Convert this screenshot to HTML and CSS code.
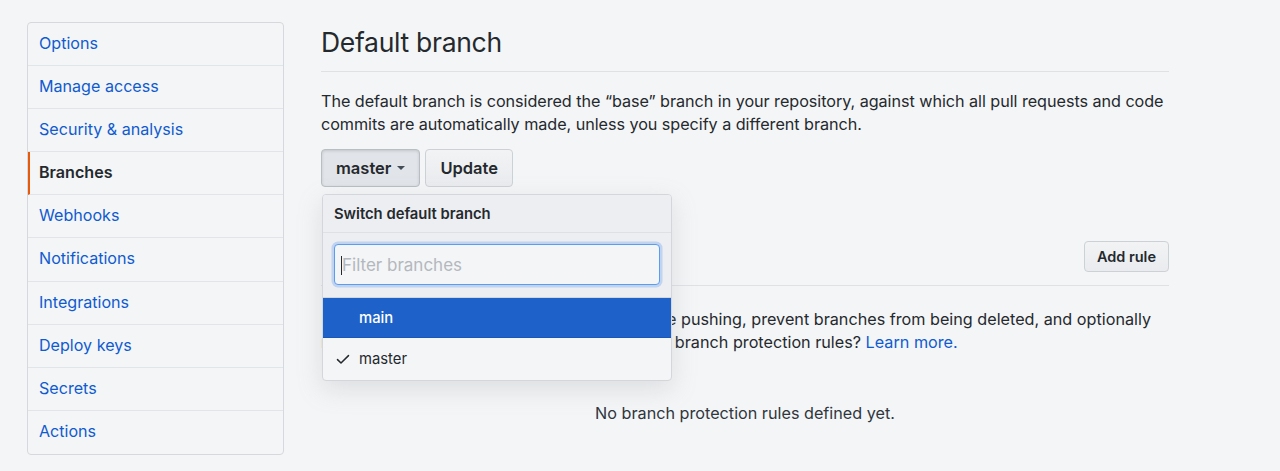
FILE: index.html
```html
<!DOCTYPE html>
<html lang="en">
<head>
<meta charset="utf-8">
<title>Branches</title>
<link rel="stylesheet" href="styles.css">
</head>
<body>
<div class="page">
  <nav class="sidebar">
    <a class="menu-item" href="#">Options</a>
    <a class="menu-item" href="#">Manage access</a>
    <a class="menu-item" href="#">Security &amp; analysis</a>
    <a class="menu-item selected" href="#">Branches</a>
    <a class="menu-item" href="#">Webhooks</a>
    <a class="menu-item" href="#">Notifications</a>
    <a class="menu-item" href="#">Integrations</a>
    <a class="menu-item" href="#">Deploy keys</a>
    <a class="menu-item" href="#">Secrets</a>
    <a class="menu-item" href="#">Actions</a>
  </nav>
  <main class="main">
    <div class="subhead">
      <h2 class="subhead-heading">Default branch</h2>
    </div>
    <p class="desc">The default branch is considered the “base” branch in your repository, against which all pull requests and code commits are automatically made, unless you specify a different branch.</p>
    <div class="branch-form">
      <div class="btn-group">
        <button class="btn btn-selected">master <span class="caret"></span></button>
        <button class="btn">Update</button>
      </div>
      <div class="dropdown">
        <div class="dropdown-header">Switch default branch</div>
        <div class="dropdown-filter">
          <div class="filter-input"><span class="cursor"></span><span class="placeholder">Filter branches</span></div>
        </div>
        <div class="dropdown-item active"><span class="check-slot"></span>main</div>
        <div class="dropdown-item"><span class="check-slot"><svg width="16" height="16" viewBox="0 0 16 16"><polyline points="2.5,8.6 6,12 13.5,4.6" fill="none" stroke="#24292e" stroke-width="1.5" stroke-linecap="round" stroke-linejoin="round"/></svg></span>master</div>
      </div>
    </div>

    <div class="subhead subhead-2">
      <h2 class="subhead-heading">Branch protection rules</h2>
      <button class="btn btn-sm">Add rule</button>
    </div>
    <p class="desc desc-2">Define branch protection rules to disable force pushing, prevent branches from being deleted, and optionally require status checks before merging. New to branch protection rules? <a href="#" class="link">Learn more.</a></p>
    <div class="blankslate">No branch protection rules defined yet.</div>
  </main>
</div>
</body>
</html>
```

FILE: styles.css
```css
* { box-sizing: border-box; }
html, body {
  margin: 0;
  background: #f4f5f6;
  color: #24292e;
  font-family: Inter, "Noto Sans", sans-serif;
  font-size: 16px;
}
.page {
  display: flex;
  gap: 37px;
  padding: 22px 0 0 27px;
}
.sidebar {
  width: 257px;
  flex: none;
  align-self: flex-start;
  border: 1px solid #d5d8dc;
  border-radius: 4px;
  display: flex;
  flex-direction: column;
}
.menu-item {
  display: block;
  padding: 9px 11px 11px;
  line-height: 22px;
  height: 43.1px;
  color: #0f5bd0;
  text-decoration: none;
  border-bottom: 1px solid #e1e4e8;
  font-size: 16.1px;
}
.menu-item:last-child { border-bottom: 0; }
.menu-item.selected {
  color: #24292e;
  font-weight: 600;
  border-left: 2px solid #e8590c;
  padding-left: 9px;
}
.main {
  width: 848px;
  flex: none;
}
.subhead {
  display: flex;
  align-items: center;
  justify-content: space-between;
  border-bottom: 1px solid #dfe2e5;
  padding-top: 0;
  padding-bottom: 9px;
  margin: 0;
}
.subhead-heading {
  margin: 0;
  font-size: 26.5px;
  letter-spacing: -0.3px;
  font-weight: 400;
  line-height: 40px;
}
.desc {
  margin: 18px 0 0;
  font-size: 16.2px;
  letter-spacing: -0.05px;
  line-height: 23px;
}
.branch-form {
  position: relative;
  margin-top: 13px;
}
.btn-group {
  display: flex;
  gap: 5px;
}
.btn {
  font-family: inherit;
  font-size: 16.5px;
  font-weight: 600;
  color: #24292e;
  height: 38px;
  padding: 0 14px;
  border: 1px solid #cdd1d6;
  border-radius: 4px;
  background: linear-gradient(#f2f3f5, #e9ebee);
  display: inline-flex;
  align-items: center;
  gap: 6px;
}
.btn-selected {
  background: #e1e4e8;
  border-color: #b9bec4;
  box-shadow: inset 0 1px 3px rgba(27,31,35,0.15);
}
.caret {
  width: 0;
  height: 0;
  border-left: 4px solid transparent;
  border-right: 4px solid transparent;
  border-top: 4px solid #444d56;
}
.dropdown {
  position: absolute;
  top: 45px;
  left: 1px;
  width: 350px;
  background: #f4f5f6;
  border: 1px solid #d3d6da;
  border-radius: 4px;
  box-shadow: 0 8px 24px rgba(149,157,165,0.25);
  z-index: 10;
  overflow: hidden;
}
.dropdown-header {
  background: #eceef1;
  border-bottom: 1px solid #dde0e4;
  height: 38px;
  padding: 0 11px;
  display: flex;
  align-items: center;
  font-size: 14.8px;
  font-weight: 600;
}
.dropdown-filter {
  padding: 11px 11px 12px;
  background: #eceef1;
  border-bottom: 1px solid #d3d6da;
}
.filter-input {
  position: relative;
  height: 41px;
  border: 1.5px solid #5b9bf0;
  border-radius: 4px;
  background: #f4f5f6;
  box-shadow: 0 0 0 2.5px rgba(90,150,240,0.3);
  display: flex;
  align-items: center;
  padding-left: 7px;
  font-size: 17px;
}
.placeholder { color: #b3b8be; }
.cursor {
  position: absolute;
  left: 6px;
  top: 11px;
  width: 1px;
  height: 19px;
  background: #24292e;
}
.dropdown-item {
  display: flex;
  align-items: center;
  height: 40px;
  padding-left: 12px;
  font-size: 14.8px;
  border-bottom: 1px solid #e1e4e8;
}
.dropdown-item:last-child { border-bottom: 0; height: 42px; }
.dropdown-item.active {
  background: #1e62c9;
  color: #fff;
  font-weight: 500;
  border-bottom: 1px solid #1a56b8;
}
.check-slot {
  width: 24px;
  display: inline-flex;
  align-items: center;
}
.subhead-2 {
  padding-top: 54px;
  padding-bottom: 13px;
}
.subhead-2 .subhead-heading { font-size: 22px; line-height: 31px; }
.btn-sm {
  height: 31px;
  font-size: 14.5px;
  padding: 0 12px;
}
.desc-2 { margin-top: 22px; letter-spacing: 0; }
.link { color: #0f5bd0; text-decoration: none; }
.blankslate {
  text-align: center;
  margin-top: 48px;
  font-size: 16.2px;
  line-height: 23px;
  color: #2f363d;
}
```
